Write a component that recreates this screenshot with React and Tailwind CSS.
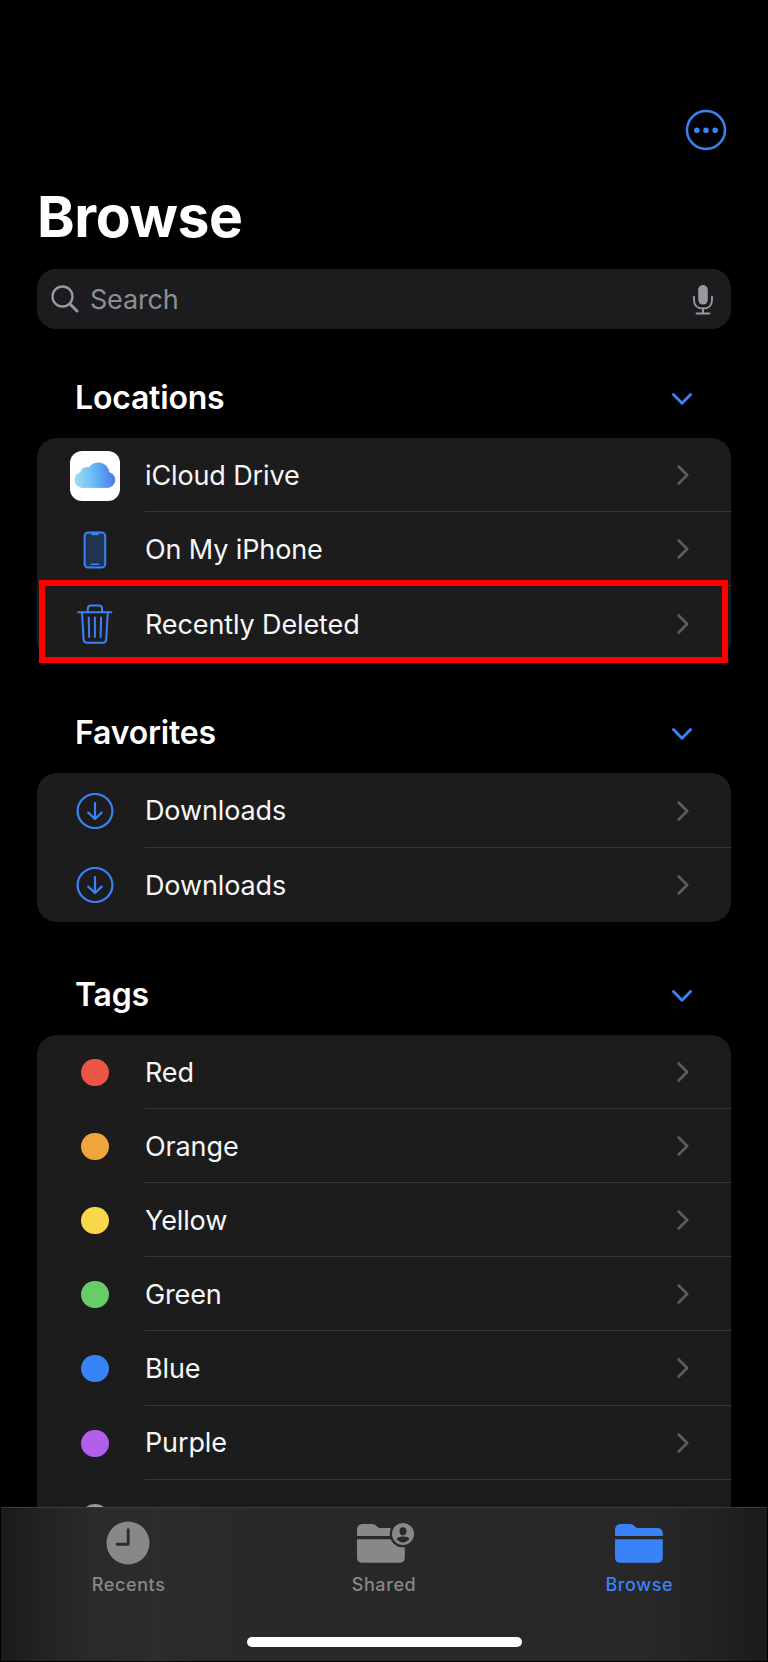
import React from 'react'

const tags = [
  { name: 'Red', color: 'bg-[#eb5545]' },
  { name: 'Orange', color: 'bg-[#f1a33c]' },
  { name: 'Yellow', color: 'bg-[#f8d74a]' },
  { name: 'Green', color: 'bg-[#67ce67]' },
  { name: 'Blue', color: 'bg-[#3a82f7]' },
  { name: 'Purple', color: 'bg-[#b260ea]' },
  { name: 'Gray', color: 'bg-[#98989d]' },
]

function MoreIcon() {
  return (
    <svg width="42" height="42" viewBox="0 0 42 42" className="text-[#3a82f7]">
      <circle cx="21" cy="21" r="19" fill="none" stroke="currentColor" strokeWidth="2.5" />
      <circle cx="11.8" cy="21.2" r="2.8" fill="currentColor" />
      <circle cx="21" cy="21.2" r="2.8" fill="currentColor" />
      <circle cx="30.2" cy="21.2" r="2.8" fill="currentColor" />
    </svg>
  )
}

function SearchIcon() {
  return (
    <svg width="28" height="28" viewBox="0 0 28 28" fill="none" stroke="#98989f" strokeLinecap="round">
      <circle cx="11.5" cy="11.5" r="10" strokeWidth="2.3" />
      <path d="M19 19l7 7" strokeWidth="3" />
    </svg>
  )
}

function MicIcon() {
  return (
    <svg width="20" height="30" viewBox="0 0 20 30" fill="none" stroke="#98989f" strokeLinecap="round" className="mt-[2px]">
      <rect x="5.2" y="0" width="9.6" height="19.6" rx="4.8" fill="#98989f" stroke="none" />
      <path d="M1 11.8v3.4c0 5 3.6 8.3 9 8.3s9-3.3 9-8.3v-3.4" strokeWidth="1.9" />
      <path d="M10 23.5v5M3.6 28.6h12.8" strokeWidth="2" />
    </svg>
  )
}

function ICloudIcon() {
  return (
    <svg width="50" height="50" viewBox="0 0 50 50">
      <defs>
        <linearGradient id="cloud" x1="5" y1="28" x2="45" y2="24" gradientUnits="userSpaceOnUse">
          <stop offset="0" stopColor="#9fdcf3" />
          <stop offset="0.5" stopColor="#66b8f6" />
          <stop offset="1" stopColor="#4a76ea" />
        </linearGradient>
      </defs>
      <rect width="50" height="50" rx="12" fill="#fff" />
      <g fill="url(#cloud)">
        <circle cx="28.3" cy="22.3" r="10.9" />
        <circle cx="16.6" cy="22.8" r="6.7" />
        <circle cx="12.5" cy="28.9" r="8" />
        <circle cx="37.2" cy="28.9" r="8" />
        <rect x="12.5" y="24" width="24.7" height="12.9" />
      </g>
    </svg>
  )
}

function PhoneIcon() {
  return (
    <svg width="50" height="50" viewBox="0 0 50 50" fill="none" stroke="#3a82f7">
      <rect x="14.6" y="7.5" width="20.6" height="35" rx="3.6" fill="#21344f" strokeWidth="2" />
      <path d="M21 7.5h8v1.2q0 1.5-1.5 1.5h-5q-1.5 0-1.5-1.5Z" fill="#3a82f7" stroke="none" />
      <path d="M21.2 39.3h7.6" strokeWidth="1.5" strokeLinecap="round" />
    </svg>
  )
}

function TrashIcon() {
  return (
    <svg width="50" height="50" viewBox="0 0 50 50" fill="none" stroke="#3a82f7" strokeWidth="2" strokeLinecap="round" strokeLinejoin="round">
      <path d="M8.2 13.3h33.2" />
      <path d="M17.8 13v-3.3q0-3.2 3.2-3.2h7.8q3.2 0 3.2 3.2V13" />
      <path d="M12 13.5l1.6 27q.2 3.3 3.4 3.3h15.8q3.2 0 3.4-3.3l1.6-27" />
      <path d="M18.7 18.5l.5 19.5M24.9 18.5v19.5M31.1 18.5l-.5 19.5" />
    </svg>
  )
}

function DownloadIcon() {
  return (
    <svg width="50" height="50" viewBox="0 0 50 50" fill="none" stroke="#3a82f7" strokeWidth="2.2" strokeLinecap="round" strokeLinejoin="round">
      <ellipse cx="25" cy="25" rx="17.4" ry="17" />
      <path d="M25 17v15.8M18.3 26.6l6.7 6.4 6.7-6.4" />
    </svg>
  )
}

function ChevronRight() {
  return (
    <svg width="12" height="20" viewBox="0 0 12 20" fill="none" stroke="#5b5b60" strokeWidth="2.7" strokeLinecap="round" strokeLinejoin="round" className="mt-px">
      <path d="M1.6 1.5l8.6 8.5-8.6 8.5" />
    </svg>
  )
}

function ChevronDown() {
  return (
    <svg width="20" height="12" viewBox="0 0 20 12" fill="none" stroke="#3a82f7" strokeWidth="2.9" strokeLinecap="round" strokeLinejoin="round" className="mt-[2px]">
      <path d="M1.5 1.6l8.5 8.6 8.5-8.6" />
    </svg>
  )
}

function ClockIcon() {
  return (
    <svg width="44" height="44" viewBox="0 0 44 44" className="mr-[2px]">
      <circle cx="22" cy="22" r="21.5" fill="#888888" />
      <path d="M22.2 8.8v14.5H11.3" fill="none" stroke="#2b2b2b" strokeWidth="2.9" strokeLinecap="round" strokeLinejoin="round" />
    </svg>
  )
}

function Folder() {
  return (
    <g>
      <path d="M0 12.1V6Q0 0 6 0h8.5c3 0 4 .9 5.5 2.4 1.2 1.2 1.7 1.5 3.5 1.5H42q5.8 0 5.8 5.8v2.4Z" />
      <path d="M0 15.2h47.8v18q0 5.6-5.6 5.6H5.6Q0 38.8 0 33.2Z" />
    </g>
  )
}

function FolderIcon() {
  return (
    <svg width="48" height="39" viewBox="0 0 48 39" fill="#3a82f7">
      <Folder />
    </svg>
  )
}

function SharedFolderIcon() {
  return (
    <svg width="58" height="40" viewBox="0 -1 58 40" fill="#888888" className="ml-[4px]">
      <Folder />
      <circle cx="46" cy="10" r="13.3" fill="#282828" />
      <circle cx="46" cy="10" r="11" />
      <ellipse cx="46" cy="7.3" rx="3.5" ry="4.1" fill="#282828" />
      <path d="M39.8 15.6q0-3.2 6.2-3.2t6.2 3.2q-2.5 2.8-6.2 2.8t-6.2-2.8Z" fill="#282828" />
    </svg>
  )
}

function Section({ title, children }) {
  return (
    <section>
      <div className="flex h-20 items-center justify-between pl-[75px] pr-[76px]">
        <h2 className="text-[32px] font-semibold tracking-[-0.2px]">{title}</h2>
        <ChevronDown />
      </div>
      <ul className="mx-[37px] rounded-[20px] bg-[#1c1c1d]">{children}</ul>
    </section>
  )
}

function Row({ icon, label, last, highlighted }) {
  return (
    <li className="relative flex h-[74.16px] pl-[32.5px]">
      <div className="mr-[25.5px] flex w-[50px] shrink-0 items-center justify-center pt-px">{icon}</div>
      <div
        className={`flex flex-1 items-center justify-between pr-[42px] ${
          last ? '' : 'border-b border-[#38383a]'
        }`}
      >
        <span className="pt-[3px] text-[27px] tracking-[-0.12px] text-[#f7f7f7]">{label}</span>
        <ChevronRight />
      </div>
      {highlighted && (
        <div className="absolute -top-[6px] left-[2px] h-[83px] w-[689px] border-[6px] border-[#fe0000]" />
      )}
    </li>
  )
}

function Tab({ icon, label, active }) {
  return (
    <button className="flex flex-1 flex-col items-center">
      <div className="flex h-[44px] items-center">{icon}</div>
      <span
        className={`mt-[7px] text-[18px] leading-[26px] font-medium tracking-[0.6px] ${
          active ? 'text-[#3a82f7]' : 'text-[#888888]'
        }`}
      >
        {label}
      </span>
    </button>
  )
}

function App() {
  return (
    <div className="flex h-[1662px] w-[768px] flex-col bg-black pb-px font-['Inter',sans-serif] text-white">
      <main className="min-h-0 flex-1 overflow-hidden">
        {/* Title and search */}
        <header className="px-[37px] pt-[109px]">
          <div className="flex justify-end pr-[4px]">
            <button className="block h-[42px]">
              <MoreIcon />
            </button>
          </div>
          <h1 className="mt-[36px] text-[57px] leading-[60px] font-bold tracking-[-0.4px]">Browse</h1>
          <div className="mt-[22px] flex h-[60px] items-center rounded-[19px] bg-[#1c1c1e] pr-[18px] pl-[14px]">
            <SearchIcon />
            <span className="ml-[11px] flex-1 pt-[3px] text-[27px] tracking-[-0.2px] text-[#8e8e95]">Search</span>
            <MicIcon />
          </div>
        </header>

        {/* File lists */}
        <div className="flex flex-col gap-[33px] pt-[29px]">
          <Section title="Locations">
            <Row icon={<ICloudIcon />} label="iCloud Drive" />
            <Row icon={<PhoneIcon />} label="On My iPhone" />
            <Row last highlighted icon={<TrashIcon />} label="Recently Deleted" />
          </Section>

          <Section title="Favorites">
            <Row icon={<DownloadIcon />} label="Downloads" />
            <Row last icon={<DownloadIcon />} label="Downloads" />
          </Section>

          <Section title="Tags">
            {tags.map((tag, i) => (
              <Row
                key={tag.name}
                last={i === tags.length - 1}
                icon={<span className={`h-[27px] w-[28px] rounded-full ${tag.color}`} />}
                label={tag.name}
              />
            ))}
          </Section>
        </div>
      </main>

      {/* Tab bar */}
      <nav className="mx-px flex h-[154px] shrink-0 flex-col items-center border-t border-[#3b3b3c] bg-[linear-gradient(90deg,#1a1a1a_0%,#222222_5%,#2a2a2a_12%,#2c2c2c_20%,#282828_36%,#282828_84%,#222222_93%,#1b1b1b_100%)]">
        <div className="flex w-full pt-[13px]">
          <Tab icon={<ClockIcon />} label="Recents" />
          <Tab icon={<SharedFolderIcon />} label="Shared" />
          <Tab active icon={<FolderIcon />} label="Browse" />
        </div>
        <div className="mt-[39px] h-[10px] w-[275px] rounded-full bg-white" />
      </nav>
    </div>
  )
}

export default App
